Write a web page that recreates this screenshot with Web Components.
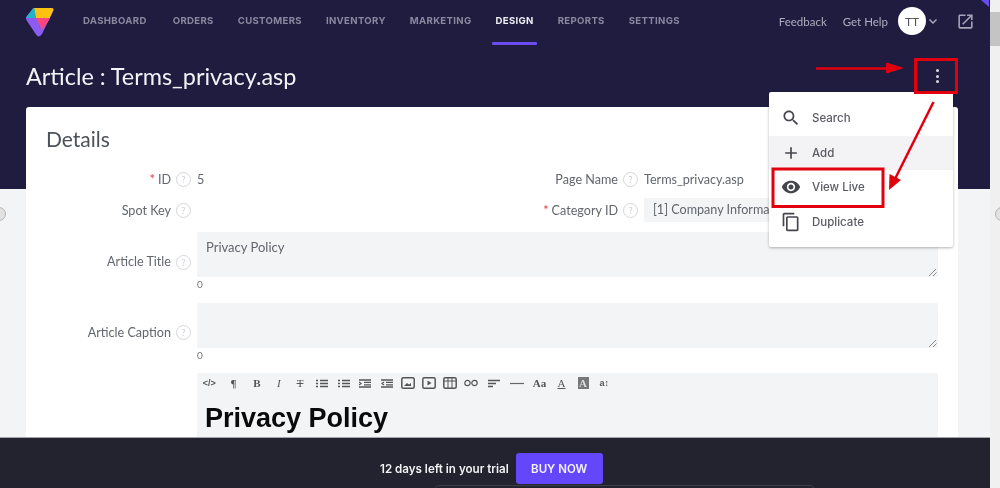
<!DOCTYPE html>
<html lang="en">
<head>
<meta charset="utf-8">
<title>Article : Terms_privacy.asp</title>
<style>
  html, body { margin: 0; height: 100%; overflow: hidden; }
  body { font-family: "Lato", "Liberation Sans", sans-serif; }
</style>
</head>
<body>
<app-shell>
  <top-nav></top-nav>
  <page-title>Article : Terms_privacy.asp</page-title>
  <details-card></details-card>
  <action-menu slot="overlay"></action-menu>
  <page-annotations slot="overlay"></page-annotations>
  <trial-bar slot="footer"></trial-bar>
</app-shell>

<script>
const ICONS = {
  search: "M15.5 14h-.79l-.28-.27C15.41 12.59 16 11.11 16 9.5 16 5.91 13.09 3 9.5 3S3 5.91 3 9.5 5.91 16 9.5 16c1.61 0 3.09-.59 4.23-1.57l.27.28v.79l5 4.99L20.49 19l-4.99-5zm-6 0C7.01 14 5 11.99 5 9.5S7.01 5 9.5 5 14 7.01 14 9.5 11.99 14 9.5 14z",
  add: "M19 13h-6v6h-2v-6H5v-2h6V5h2v6h6v2z",
  eye: "M12 4.5C7 4.5 2.73 7.61 1 12c1.73 4.39 6 7.5 11 7.5s9.27-3.11 11-7.5c-1.73-4.39-6-7.5-11-7.5zM12 17c-2.76 0-5-2.24-5-5s2.24-5 5-5 5 2.24 5 5-2.24 5-5 5zm0-8c-1.66 0-3 1.34-3 3s1.34 3 3 3 3-1.34 3-3-1.34-3-3-3z",
  copy: "M16 1H4c-1.1 0-2 .9-2 2v14h2V3h12V1zm3 4H8c-1.1 0-2 .9-2 2v14c0 1.1.9 2 2 2h11c1.1 0 2-.9 2-2V7c0-1.1-.9-2-2-2zm0 16H8V7h11v14z",
  open: "M19 19H5V5h7V3H5c-1.11 0-2 .9-2 2v14c0 1.1.89 2 2 2h14c1.1 0 2-.9 2-2v-7h-2v7zM14 3v2h3.59l-9.83 9.83 1.41 1.41L19 6.41V10h2V3h-7z",
};

class AppShell extends HTMLElement {
  constructor() {
    super();
    this.attachShadow({ mode: "open" });
    this.shadowRoot.innerHTML = `
      <style>
        /* the reference is a soft, rescaled capture */
        :host { display: flex; width: 1000px; height: 488px; position: relative; overflow: hidden; filter: blur(.4px); }
        .page { width: 990px; display: flex; flex-direction: column; }
        main {
          flex: 1; min-height: 0; overflow: hidden; display: flex; flex-direction: column;
          background: linear-gradient(#201c40 189px, #f3f4f6 189px);
        }
        .footer { display: block; flex: none; }
        .scrollbar { width: 10px; background: #f0f0f0; padding-top: 12px; box-sizing: border-box; }
        .thumb { height: 34px; background: #c4c4c4; }
        .corner {
          position: absolute; left: 981px; top: 0; width: 0; height: 0;
          border-top: 7px solid #6a4cf5; border-left: 8px solid transparent;
        }
        .handle {
          position: absolute; top: 207px; width: 12px; height: 12px; border-radius: 50%;
          background: #e2e2e2; border: 1px solid #b4b4b4;
        }
        .handle.left { left: -8px; }
        .handle.right { left: 995px; }
      </style>
      <div class="page">
        <main><slot></slot></main>
        <div class="footer"><slot name="footer"></slot></div>
      </div>
      <div class="scrollbar"><div class="thumb"></div></div>
      <div class="corner"></div>
      <div class="handle left"></div>
      <div class="handle right"></div>
      <slot name="overlay"></slot>
    `;
  }
}

class TopNav extends HTMLElement {
  constructor() {
    super();
    const links = ["Dashboard", "Orders", "Customers", "Inventory", "Marketing", "Design", "Reports", "Settings"];
    this.attachShadow({ mode: "open" });
    this.shadowRoot.innerHTML = `
      <style>
        :host { display: flex; flex: none; align-items: flex-start; height: 45px; padding-left: 25px; box-sizing: border-box; }
        .logo { margin-top: 6px; flex: none; }
        nav { display: flex; gap: 24px; margin-left: 28px; height: 45px; }
        a {
          display: block; height: 45px; box-sizing: border-box; padding-top: 15px; position: relative;
          font: 700 9.6px/12px "Inter", "Liberation Sans", sans-serif; letter-spacing: .33px;
          text-transform: uppercase; color: #8a889e;
        }
        a:first-child { margin-right: 2px; }
        a.active { color: #eeedf4; }
        a.active::after {
          content: ""; position: absolute; left: -3px; right: -3px; bottom: 0; height: 3px;
          background: #6a4cf0; border-radius: 1px;
        }
        .right { margin-left: auto; display: flex; align-items: center; height: 42px; color: #aeadbd; font-size: 11.5px; }
        .right span { margin-right: 16px; }
        .right .help { margin-right: 10px; }
        .avatar {
          width: 28px; height: 28px; border-radius: 50%; background: #fff; color: #55555f;
          display: flex; align-items: center; justify-content: center; font-size: 12px; flex: none;
        }
        .chev { margin: 0 0 0 1px; }
        .open { margin: 0 15px 0 17px; }
      </style>
      <svg class="logo" width="30" height="32" viewBox="24 5 30 32">
        <defs><clipPath id="mark"><path d="M33 7H50.500Q53.500 7 52.300 10L41 33Q38 37.500 35 33.500L26 20Q24 17.500 26 15L30.500 9.500Q31.500 7 33 7Z"/></clipPath></defs>
        <g clip-path="url(#mark)">
          <rect x="24" y="5" width="30" height="32" fill="#8a5cf2"/>
          <path d="M29 5H36L34 17H24Z" fill="#1fb4c8"/>
          <path d="M33 5H54L49 17H35Z" fill="#ffc211"/>
          <path d="M35 17H50L41 29Z" fill="#f9467f"/>
        </g>
      </svg>
      <nav>${links.map(l => `<a class="${l === "Design" ? "active" : ""}">${l}</a>`).join("")}</nav>
      <div class="right">
        <span>Feedback</span>
        <span class="help">Get Help</span>
        <div class="avatar">TT</div>
        <svg class="chev" width="12" height="12" viewBox="0 0 12 12"><path d="M2.500 4.500L6 8l3.500-3.500" fill="none" stroke="#aeadbd" stroke-width="1.400"/></svg>
        <svg class="open" width="19" height="19" viewBox="0 0 24 24"><path fill="#a5a4b6" d="${ICONS.open}"/></svg>
      </div>
    `;
  }
}

class PageTitle extends HTMLElement {
  constructor() {
    super();
    this.attachShadow({ mode: "open" });
    this.shadowRoot.innerHTML = `
      <style>
        :host { display: flex; flex: none; align-items: center; justify-content: space-between; height: 62px; padding: 0 51px 0 26px; box-sizing: border-box; }
        h1 { margin: 0; font: 400 23.400px/30px "Lato", "Liberation Sans", sans-serif; color: #f3f3f7; }
        .kebab { display: flex; flex-direction: column; gap: 2.500px; }
        .kebab i { width: 3px; height: 3px; border-radius: 50%; background: #d9d9e2; }
      </style>
      <h1><slot></slot></h1>
      <div class="kebab"><i></i><i></i><i></i></div>
    `;
  }
}

class HelpIcon extends HTMLElement {
  constructor() {
    super();
    this.attachShadow({ mode: "open" });
    this.shadowRoot.innerHTML = `
      <style>
        :host {
          display: inline-flex; align-items: center; justify-content: center; width: 13px; height: 13px;
          border: 1px solid #d6d7da; border-radius: 50%; color: #cfd0d4;
          font: 400 9px/1 "Lato", "Liberation Sans", sans-serif;
        }
      </style>?`;
  }
}

class FormField extends HTMLElement {
  constructor() {
    super();
    this.attachShadow({ mode: "open" });
    this.shadowRoot.innerHTML = `
      <style>
        :host {
          display: grid; grid-template-columns: 145px 26px 1fr; align-items: center;
          font: 400 12.600px/16px "Lato", "Liberation Sans", sans-serif; color: #62666d;
        }
        .label { text-align: right; }
        .req { color: #e5343a; margin-right: 3px; }
        .help { display: flex; }
        help-icon { margin-left: 5px; }
      </style>
      <div class="label"></div>
      <div class="help"><help-icon></help-icon></div>
      <div class="value"><slot></slot></div>
    `;
    const label = this.shadowRoot.querySelector(".label");
    label.innerHTML = (this.hasAttribute("required") ? '<span class="req">*</span>' : "") + this.getAttribute("label");
  }
}

class TextBox extends HTMLElement {
  constructor() {
    super();
    this.attachShadow({ mode: "open" });
    this.shadowRoot.innerHTML = `
      <style>
        :host { display: block; color: #62666d; }
        .box {
          height: 45px; box-sizing: border-box; padding: 7px 9px; background: #f3f4f6; border-radius: 2px;
          display: flex; flex-direction: column; font-size: 13px; line-height: 16px;
        }
        svg { margin-top: auto; align-self: flex-end; margin-right: -8px; margin-bottom: -6px; }
        .count { height: 15.500px; font-size: 10px; line-height: 15px; color: #777; }
      </style>
      <div class="box">
        <div><slot></slot></div>
        <svg width="9" height="8" viewBox="0 0 9 8"><path d="M1 8L8 1M5 8L8.500 4.500" stroke="#888" fill="none"/></svg>
      </div>
      <div class="count">0</div>
    `;
  }
}

class EditorToolbar extends HTMLElement {
  constructor() {
    super();
    const list = d => `<svg width="12" height="9" viewBox="0 0 12 9"><path d="${d}" stroke="#555" stroke-width="1.300" fill="none"/></svg>`;
    const frame = inner => `<svg width="14" height="12" viewBox="0 0 14 12"><rect x=".8" y=".8" width="12.400" height="10.400" rx="1.500" fill="none" stroke="#555" stroke-width="1.500"/>${inner}</svg>`;
    const tools = [
      `<b class="s">&lt;/&gt;</b>`,
      `<b class="t">¶</b>`,
      `<b class="t">B</b>`,
      `<i class="t">I</i>`,
      `<s class="t">T</s>`,
      list("M0 1.500h2M4 1.500h8M0 4.500h2M4 4.500h8M0 7.500h2M4 7.500h8"),
      list("M0 1.500h2M4 1.500h8M0 4.500h2M4 4.500h8M0 7.500h2M4 7.500h8"),
      list("M0 1h12M5 3.400h7M5 5.800h7M0 8h12M0 3l2 1.500L0 6"),
      list("M0 1h12M5 3.400h7M5 5.800h7M0 8h12M3 3L1 4.500L3 6"),
      frame(`<path d="M3 9l3-3 2 1.500L10 6v3z" fill="#555"/>`),
      frame(`<path d="M5.500 3.500l4 2.500-4 2.500z" fill="#555"/>`),
      frame(`<path d="M1 4h12M5 1v10M9 1v10" stroke="#555" fill="none"/>`),
      `<svg width="14" height="8" viewBox="0 0 14 8"><circle cx="3.500" cy="4" r="2.700" fill="none" stroke="#555" stroke-width="1.200"/><circle cx="10.500" cy="4" r="2.700" fill="none" stroke="#555" stroke-width="1.200"/></svg>`,
      list("M0 1.500h12M0 4.500h8M0 7.500h5"),
      `<svg width="14" height="3" viewBox="0 0 14 3"><path d="M0 1.500h14" stroke="#666" stroke-width="1.200"/></svg>`,
      `<b class="t">Aa</b>`,
      `<u class="t">A</u>`,
      `<b class="t inv">A</b>`,
      `<b class="s">a↕</b>`,
    ];
    this.attachShadow({ mode: "open" });
    this.shadowRoot.innerHTML = `
      <style>
        :host {
          display: grid; height: 20px; align-items: center; justify-items: center;
          grid-template-columns: 24.500px 24px 23px 20.500px 22px 22.500px 21px 21px 22px 21.500px 20.500px 20px 22px 24px 23px 22px 22px 21px 21.500px;
          justify-content: start; color: #555;
        }
        div { display: flex; }
        .t, .s { font-family: "Liberation Serif", serif; font-size: 11px; line-height: 12px; text-decoration-thickness: 1px; }
        .s { font-family: "Liberation Sans", sans-serif; font-size: 9px; }
        .inv { background: #777; color: #ddd; width: 11px; justify-content: center; text-align: center; }
      </style>
      ${tools.map(t => `<div>${t}</div>`).join("")}
    `;
  }
}

class DetailsCard extends HTMLElement {
  constructor() {
    super();
    this.attachShadow({ mode: "open" });
    this.shadowRoot.innerHTML = `
      <style>
        :host {
          display: block; flex: 1; min-height: 0; margin: 0 32px 0 26px; background: #fff; border-radius: 3px 3px 0 0;
          padding-top: 19px; box-sizing: border-box;
        }
        h2 { margin: 0 0 12px 20px; font: 400 21px/26px "Lato", "Liberation Sans", sans-serif; color: #4c5259; }
        .pair { display: grid; grid-template-columns: 447px 1fr; height: 31px; padding-right: 20px; }
        .stack { display: flex; flex-direction: column; gap: 10px; padding: 6px 20px 0 0; }
        .select {
          display: block; height: 24px; margin-top: -2px; padding-left: 9px; background: #f3f4f6; border-radius: 2px; line-height: 24px;
        }
        .editor { margin-left: 171px; background: #f3f4f6; height: 100px; border-radius: 2px; }
        .editor h1 { margin: 6px 0 0 8px; font: 700 27px/38px "Liberation Sans", sans-serif; color: #0a0a0a; }
      </style>
      <h2>Details</h2>
      <div class="pair">
        <form-field label="ID" required>5</form-field>
        <form-field label="Page Name">Terms_privacy.asp</form-field>
      </div>
      <div class="pair">
        <form-field label="Spot Key"></form-field>
        <form-field label="Category ID" required><span class="select">[1] Company Information</span></form-field>
      </div>
      <div class="stack">
        <form-field label="Article Title"><text-box>Privacy Policy</text-box></form-field>
        <form-field label="Article Caption"><text-box></text-box></form-field>
        <div class="editor">
          <editor-toolbar></editor-toolbar>
          <h1>Privacy Policy</h1>
        </div>
      </div>
    `;
  }
}

class MenuItem extends HTMLElement {
  constructor() {
    super();
    this.attachShadow({ mode: "open" });
    this.shadowRoot.innerHTML = `
      <style>
        :host {
          display: flex; align-items: center; height: 34.500px; padding-left: 12px; gap: 11px;
          font: 500 11.500px/14px "Inter", "Liberation Sans", sans-serif; color: #5a5a64;
        }
        :host([active]) { background: #f3f3f5; }
        svg { width: 20px; height: 20px; fill: #45454d; flex: none; }
      </style>
      <svg viewBox="0 0 24 24"><path d="${ICONS[this.getAttribute("icon")]}"/></svg>
      <slot></slot>
    `;
  }
}

class ActionMenu extends HTMLElement {
  constructor() {
    super();
    this.attachShadow({ mode: "open" });
    this.shadowRoot.innerHTML = `
      <style>
        :host {
          position: absolute; left: 769px; top: 92px; width: 184px; height: 155px; box-sizing: border-box; padding-top: 9px;
          background: #fff; border-radius: 2px; box-shadow: 0 1px 3px rgba(0,0,0,.3);
        }
      </style>
      <menu-item icon="search">Search</menu-item>
      <menu-item icon="add" active>Add</menu-item>
      <menu-item icon="eye">View Live</menu-item>
      <menu-item icon="copy">Duplicate</menu-item>
    `;
  }
}

class PageAnnotations extends HTMLElement {
  constructor() {
    super();
    this.attachShadow({ mode: "open" });
    this.shadowRoot.innerHTML = `
      <style>
        :host { position: absolute; left: 0; top: 0; pointer-events: none; }
        svg { display: block; }
      </style>
      <svg width="1000" height="488" fill="none" stroke="#e2000f">
        <rect x="915.500" y="59.500" width="41" height="33" stroke-width="3"/>
        <rect x="773" y="169" width="110" height="37.500" stroke-width="3"/>
        <path d="M816 68.500H888" stroke-width="2.500"/>
        <path d="M904 68L886 62.500V73.500Z" fill="#e2000f" stroke="none"/>
        <path d="M933.500 102L895 179" stroke-width="2.500"/>
        <path d="M889 190L889.500 174L901 180Z" fill="#e2000f" stroke="none"/>
      </svg>
    `;
  }
}

class TrialBar extends HTMLElement {
  constructor() {
    super();
    this.attachShadow({ mode: "open" });
    this.shadowRoot.innerHTML = `
      <style>
        :host {
          display: block; height: 51px; box-sizing: border-box; background: #23232f; border-top: 1px solid #a4a4aa;
          overflow: hidden; padding-top: 15px;
        }
        .row { display: flex; align-items: center; height: 31px; gap: 7px; padding-left: 380px; }
        .row span { font: 600 11.600px/14px "Inter", "Liberation Sans", sans-serif; color: #f2f2f4; white-space: nowrap; }
        button {
          width: 87px; height: 31px; border: 0; border-radius: 3px; background: #6447fb; color: #f4f2ff; padding: 0;
          font: 600 11.500px/14px "Inter", "Liberation Sans", sans-serif;
        }
        .peek { margin: 1px 0 0 434px; width: 381px; height: 8px; border: 1px solid #3d3d47; border-radius: 5px 5px 0 0; box-sizing: border-box; }
      </style>
      <div class="row"><span>12 days left in your trial</span><button>BUY NOW</button></div>
      <div class="peek"></div>
    `;
  }
}

customElements.define("help-icon", HelpIcon);
customElements.define("form-field", FormField);
customElements.define("text-box", TextBox);
customElements.define("editor-toolbar", EditorToolbar);
customElements.define("menu-item", MenuItem);
customElements.define("action-menu", ActionMenu);
customElements.define("page-annotations", PageAnnotations);
customElements.define("top-nav", TopNav);
customElements.define("page-title", PageTitle);
customElements.define("details-card", DetailsCard);
customElements.define("trial-bar", TrialBar);
customElements.define("app-shell", AppShell);
</script>
</body>
</html>
